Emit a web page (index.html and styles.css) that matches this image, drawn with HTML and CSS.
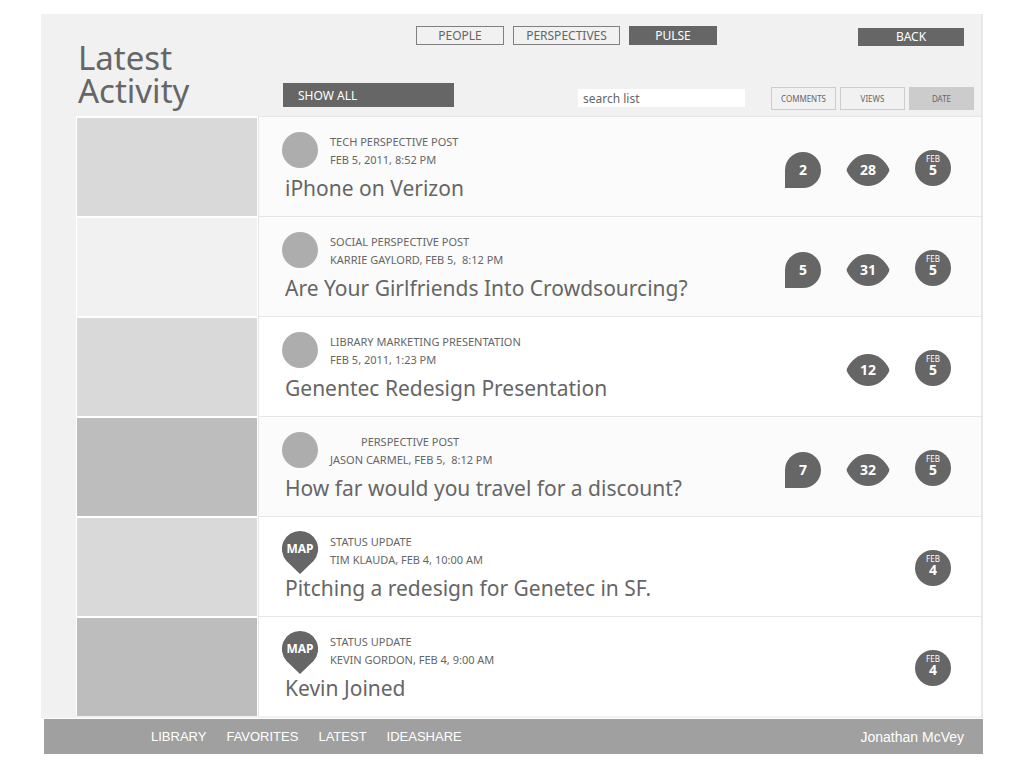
FILE: index.html
```html
<!DOCTYPE html>
<html lang="en">

<head>
    <meta charset="utf-8">
    <title>Latest Activity</title>
    <link rel="stylesheet" href="styles.css">
</head>

<body>
    <svg class="symbols">
        <symbol id="eye" viewBox="0 0 44 32">
            <path d="M1 14.500 C5 6 13 0 22 0 S39 6 43 14.500 Q43.700 16 43 17.500 C39 26 31 32 22 32 S5 26 1 17.500 Q0.300 16 1 14.500 Z" />
        </symbol>
        <symbol id="pin" viewBox="0 0 36 43">
            <path d="M18 0 A18 18 0 0 1 31.500 30 L18 43 L4.500 30 A18 18 0 0 1 18 0 Z" />
        </symbol>
    </svg>
    <div class="page">
        <header class="header">
            <h1 class="page-title">Latest<br>Activity</h1>
            <div class="top-bar">
                <nav class="tabs">
                    <button class="tab">PEOPLE</button>
                    <button class="tab wide">PERSPECTIVES</button>
                    <button class="tab active">PULSE</button>
                </nav>
                <button class="back">BACK</button>
            </div>
            <div class="tools">
                <select class="filter" aria-label="Filter activity">
                    <option>SHOW ALL</option>
                </select>
                <input class="search" type="text" placeholder="search list" aria-label="Search list">
                <div class="sort">
                    <button class="sort-btn">COMMENTS</button>
                    <button class="sort-btn">VIEWS</button>
                    <button class="sort-btn active">DATE</button>
                </div>
            </div>
        </header>
        <main class="list">
            <article class="row tinted">
                <div class="thumb"></div>
                <div class="info">
                    <div class="avatar"></div>
                    <p class="meta">TECH PERSPECTIVE POST<br>FEB 5, 2011, 8:52 PM</p>
                    <h2 class="title">iPhone on Verizon</h2>
                </div>
                <div class="badges">
                    <span class="comments">2</span>
                    <span class="views"><svg><use href="#eye" /></svg><b>28</b></span>
                    <span class="date"><small>FEB</small><b>5</b></span>
                </div>
            </article>
            <article class="row tinted">
                <div class="thumb pale"></div>
                <div class="info">
                    <div class="avatar"></div>
                    <p class="meta">SOCIAL PERSPECTIVE POST<br>KARRIE GAYLORD, FEB 5,&nbsp; 8:12 PM</p>
                    <h2 class="title">Are Your Girlfriends Into Crowdsourcing?</h2>
                </div>
                <div class="badges">
                    <span class="comments">5</span>
                    <span class="views"><svg><use href="#eye" /></svg><b>31</b></span>
                    <span class="date"><small>FEB</small><b>5</b></span>
                </div>
            </article>
            <article class="row">
                <div class="thumb"></div>
                <div class="info">
                    <div class="avatar"></div>
                    <p class="meta">LIBRARY MARKETING PRESENTATION<br>FEB 5, 2011, 1:23 PM</p>
                    <h2 class="title">Genentec Redesign Presentation</h2>
                </div>
                <div class="badges">
                    <span class="views"><svg><use href="#eye" /></svg><b>12</b></span>
                    <span class="date"><small>FEB</small><b>5</b></span>
                </div>
            </article>
            <article class="row tinted">
                <div class="thumb dark"></div>
                <div class="info">
                    <div class="avatar"></div>
                    <p class="meta"><span class="indent">PERSPECTIVE POST</span><br>JASON CARMEL, FEB 5,&nbsp; 8:12 PM</p>
                    <h2 class="title">How far would you travel for a discount?</h2>
                </div>
                <div class="badges">
                    <span class="comments">7</span>
                    <span class="views"><svg><use href="#eye" /></svg><b>32</b></span>
                    <span class="date"><small>FEB</small><b>5</b></span>
                </div>
            </article>
            <article class="row">
                <div class="thumb"></div>
                <div class="info">
                    <div class="map"><svg><use href="#pin" /></svg><b>MAP</b></div>
                    <p class="meta">STATUS UPDATE<br>TIM KLAUDA, FEB 4, 10:00 AM</p>
                    <h2 class="title">Pitching a redesign for Genetec in SF.</h2>
                </div>
                <div class="badges">
                    <span class="date"><small>FEB</small><b>4</b></span>
                </div>
            </article>
            <article class="row">
                <div class="thumb dark"></div>
                <div class="info">
                    <div class="map"><svg><use href="#pin" /></svg><b>MAP</b></div>
                    <p class="meta">STATUS UPDATE<br>KEVIN GORDON, FEB 4, 9:00 AM</p>
                    <h2 class="title">Kevin Joined</h2>
                </div>
                <div class="badges">
                    <span class="date"><small>FEB</small><b>4</b></span>
                </div>
            </article>
        </main>
    </div>
    <footer class="footer">
        <nav class="links">
            <a href="#">LIBRARY</a>
            <a href="#">FAVORITES</a>
            <a href="#">LATEST</a>
            <a href="#">IDEASHARE</a>
        </nav>
        <a href="#">Jonathan McVey</a>
    </footer>
</body>

</html>
```

FILE: styles.css
```css
* {
    box-sizing: border-box;
}

body {
    margin: 0;
    padding: 14px 41px;
    background: #fff;
    color: #666;
    font-family: "Noto Sans", "Open Sans", sans-serif;
}

button,
select,
input {
    margin: 0;
    padding: 0;
    border: 0;
    border-radius: 0;
    color: #666;
    font-family: inherit;
    font-size: 12px;
}

b {
    font-weight: bold;
}

.symbols {
    display: none;
}

.page {
    padding-left: 35px;
    background: #f1f1f1;
    border-right: 2px solid #e8e8e8;
}

/* header */
.header {
    display: grid;
    grid-template-columns: 207px 1fr;
    grid-template-rows: 69px 33px;
}

.page-title {
    grid-row: 1 / 3;
    margin: 0;
    padding: 27px 0 0 2px;
    font-size: 33px;
    font-weight: normal;
    line-height: 33px;
}

.top-bar {
    display: flex;
    justify-content: space-between;
    align-items: flex-start;
    padding: 12px 17px 0 133px;
}

.tabs {
    display: flex;
    gap: 9px;
}

.tab {
    width: 88px;
    height: 19px;
    border: 1px solid #808080;
    background: none;
    line-height: 17px;
}

.tab.wide {
    width: 107px;
}

.tab.active,
.back {
    border-color: #666;
    background: #666;
    color: #fff;
}

.back {
    width: 106px;
    height: 18px;
    margin-top: 2px;
    line-height: 18px;
}

.tools {
    display: flex;
    align-items: flex-start;
    padding-right: 7px;
}

.filter {
    appearance: none;
    width: 171px;
    height: 24px;
    padding-left: 15px;
    background: #666;
    color: #fff;
}

.search {
    width: 167px;
    height: 18px;
    margin: 6px 26px 0 auto;
    padding: 0 5px;
    background: #fff;
}

.search::placeholder {
    color: #666;
    opacity: 1;
}

.sort {
    display: flex;
    gap: 4px;
    margin-top: 4px;
}

.sort-btn {
    width: 65px;
    height: 23px;
    border: 1px solid #ccc;
    background: none;
    font-size: 8px;
}

.sort-btn.active {
    background: #ccc;
}

/* activity list */
.list {
    border-bottom: 2px solid #f1f1f1;
}

.row {
    display: grid;
    grid-template-columns: 182px 1fr auto;
    height: 100px;
    background: #fff;
}

.row.tinted {
    background: #fbfbfb;
}

.thumb {
    border: solid #fff;
    border-width: 2px 1px 0;
    background: #d9d9d9;
}

.thumb.pale {
    background: #f1f1f1;
}

.thumb.dark {
    background: #bdbdbd;
}

.info,
.badges {
    border-top: 1px solid #e6e6e6;
}

.info {
    display: grid;
    grid-template-columns: 48px 1fr;
    grid-template-rows: 42px 1fr;
    padding: 14px 0 0 23px;
    border-left: 1px solid #e6e6e6;
}

.avatar {
    width: 36px;
    height: 36px;
    margin-top: 1px;
    border-radius: 50%;
    background: #adadad;
}

.meta {
    margin: 0;
    padding-top: 2px;
    font-size: 11px;
    line-height: 18px;
}

.indent {
    padding-left: 31px;
}

.title {
    grid-column: 1 / 3;
    margin: 0;
    padding-left: 3px;
    font-size: 21px;
    font-weight: normal;
    line-height: 30px;
}

.map,
.views {
    display: grid;
    justify-items: center;
}

.map svg,
.map b,
.views svg,
.views b {
    grid-area: 1 / 1;
}

.map {
    width: 36px;
    height: 43px;
    color: #fff;
    font-size: 12px;
    line-height: 36px;
}

.map svg {
    width: 36px;
    height: 43px;
    fill: #666;
}

.badges {
    display: grid;
    grid-template-columns: 36px 44px 36px;
    column-gap: 25px;
    align-items: start;
    padding: 33px 30px 0 0;
    color: #fff;
    font-size: 14px;
    font-weight: bold;
    text-align: center;
}

.comments {
    grid-column: 1;
    height: 36px;
    margin-top: 2px;
    border-radius: 50% 50% 50% 0;
    background: #666;
    line-height: 36px;
}

.views {
    grid-column: 2;
    height: 32px;
    margin-top: 4px;
    line-height: 32px;
}

.views svg {
    width: 44px;
    height: 32px;
    fill: #666;
}

.date {
    display: flex;
    flex-direction: column;
    grid-column: 3;
    height: 36px;
    padding-top: 4px;
    border-radius: 50%;
    background: #666;
    line-height: 12px;
}

.date small {
    font-size: 8px;
    font-weight: normal;
    line-height: 10px;
}

/* footer */
.footer {
    display: flex;
    justify-content: space-between;
    align-items: center;
    height: 35px;
    margin: 1px 0 0 3px;
    padding: 0 19px 0 107px;
    background: #a0a0a0;
    font-family: "Liberation Sans", Arial, sans-serif;
    font-size: 14px;
}

.footer a {
    color: #fff;
    text-decoration: none;
}

.links {
    display: flex;
    gap: 20px;
    font-size: 13px;
}
```
